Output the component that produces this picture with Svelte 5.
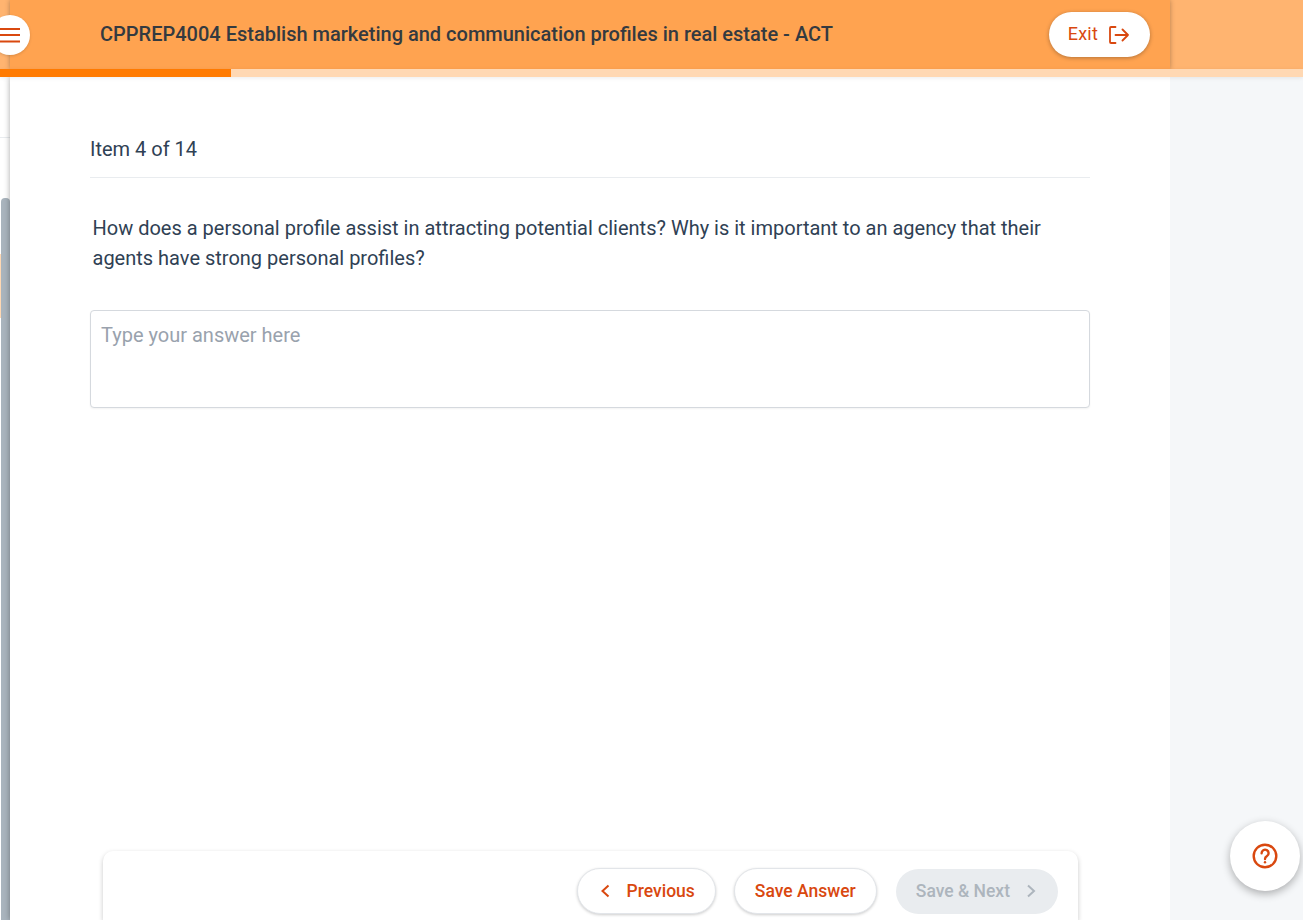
<script lang="ts">
	let answer = $state('');
</script>

<div class="page">
	<div class="top">
		<div class="top-left"></div>
		<header class="header">
			<button class="menu-btn" aria-label="Menu">
				<svg width="21" height="16" viewBox="0 0 21 16" fill="none" stroke="#d9480f" stroke-width="2">
					<path d="M0 2h20M0 8h20M0 14.4h20" />
				</svg>
			</button>
			<h1>CPPREP4004 Establish marketing and communication profiles in real estate - ACT</h1>
			<button class="exit-btn">
				<span class="exit-label">Exit</span>
				<svg width="20" height="18" viewBox="0 0 20 18" fill="none" stroke="#d9480f" stroke-width="1.8" stroke-linecap="round" stroke-linejoin="round">
					<path d="M6.5 1H2a1 1 0 0 0-1 1v14a1 1 0 0 0 1 1h4.5" />
					<path d="M6.5 9h12.5M13.5 3.5 19 9l-5.5 5.5" />
				</svg>
			</button>
		</header>
		<div class="top-right"></div>
	</div>
	<div class="progress"><div class="progress-fill" style="width: 231px"></div></div>

	<div class="body">
		<div class="strip">
			<div class="strip-line"></div>
			<div class="thumb"></div>
		</div>
		<main class="main">
			<div class="item-count">Item 4 of 14</div>
			<p class="question">
				How does a personal profile assist in attracting potential clients? Why is it important to an agency that their agents have strong personal profiles?
			</p>
			<textarea class="answer" placeholder="Type your answer here" bind:value={answer}></textarea>
			<div class="spacer"></div>
			<div class="actions">
				<button class="pill prev">
					<svg width="10" height="14" viewBox="0 0 10 14" fill="none" stroke="#d9480f" stroke-width="2"><path d="M8.5 1.5 2.5 7l6 5.5" /></svg>
					<span class="prev-label">Previous</span>
				</button>
				<button class="pill save">Save Answer</button>
				<button class="pill disabled" disabled>
					Save &amp; Next
					<svg width="10" height="14" viewBox="0 0 10 14" fill="none" stroke="#adb5bd" stroke-width="2"><path d="M2 1.5 8 7l-6 5.5" /></svg>
				</button>
			</div>
		</main>
		<aside class="side">
			<button class="help" aria-label="Help">
				<svg width="26" height="26" viewBox="0 0 26 26" fill="none" stroke="#d9480f" stroke-width="2.4" stroke-linecap="round">
					<circle cx="13" cy="13" r="11.3" />
					<path d="M9.6 10.2a3.5 3.5 0 1 1 5.4 2.9c-1.2.8-2 1.4-2 2.9" />
					<path d="M13 19.2v.1" />
				</svg>
			</button>
		</aside>
	</div>
</div>

<style>
	:global(body) {
		margin: 0;
		font-family: Roboto, 'Liberation Sans', sans-serif;
		overflow: hidden;
	}

	button {
		font-family: inherit;
		cursor: pointer;
	}

	.page {
		height: 920px;
		display: flex;
		flex-direction: column;
		background: #fff;
		overflow: hidden;
	}

	.top {
		display: flex;
		height: 69px;
		flex-shrink: 0;
	}

	.top-left {
		width: 10px;
		background: #ffb470;
	}

	.top-right {
		flex: 1;
		background: #ffb470;
	}

	.header {
		width: 1160px;
		background: #ffa350;
		display: flex;
		align-items: center;
		box-shadow: 0 0 5px rgba(0, 0, 0, 0.3);
		position: relative;
		padding-right: 20px;
		box-sizing: border-box;
	}

	.menu-btn {
		width: 40px;
		height: 40px;
		margin-left: -20px;
		border: none;
		border-radius: 50%;
		background: #fff;
		padding: 0 0 0 10px;
		display: flex;
		align-items: center;
		justify-content: flex-start;
		box-shadow: 0 1px 3px rgba(0, 0, 0, 0.15);
		flex-shrink: 0;
	}

	h1 {
		flex: 1;
		margin: 0 0 1px 70px;
		font-size: 20px;
		line-height: 23px;
		font-weight: 500;
		color: #343a40;
		white-space: nowrap;
	}

	.exit-btn {
		display: flex;
		align-items: center;
		gap: 11px;
		height: 45px;
		padding: 0 21px 0 19px;
		border: none;
		border-radius: 23px;
		background: #fff;
		color: #d9480f;
		font-size: 18px;
		box-shadow: 0 1px 4px rgba(0, 0, 0, 0.3);
	}

	.exit-label {
		margin-bottom: 2px;
		letter-spacing: 0.2px;
	}

	.progress {
		height: 8px;
		background: #ffd8b3;
		flex-shrink: 0;
		position: relative;
		z-index: 2;
		box-shadow: 0 1px 4px rgba(0, 0, 0, 0.08);
	}

	.progress-fill {
		height: 100%;
		background: #ff7a00;
	}

	.body {
		flex: 1;
		display: flex;
		min-height: 0;
	}

	.strip {
		width: 10px;
		background: #fff;
		display: flex;
		flex-direction: column;
		box-sizing: border-box;
		padding-top: 60px;
		position: relative;
	}

	.strip-line {
		height: 1px;
		background: #e9ecef;
	}

	.strip::after {
		content: '';
		position: absolute;
		left: 0;
		top: 177px;
		width: 1px;
		height: 64px;
		background: #ffd8b3;
	}

	.thumb {
		flex: 1;
		margin: 60px 0 0 1px;
		background: #a9b4bd;
		border-radius: 4px 4px 0 0;
	}

	.main {
		width: 1160px;
		box-sizing: border-box;
		padding: 59px 80px 0;
		display: flex;
		flex-direction: column;
		background: #fff;
		box-shadow: 0 0 6px rgba(0, 0, 0, 0.35);
		position: relative;
	}

	.item-count {
		font-size: 20px;
		line-height: 27px;
		color: #2f4154;
		padding-bottom: 14px;
		border-bottom: 1px solid #e9ecef;
	}

	.question {
		margin: 35px 0 0 2.5px;
		font-size: 20px;
		line-height: 30px;
		color: #2f4154;
	}

	.answer {
		margin-top: 37px;
		height: 98px;
		box-sizing: border-box;
		width: 100%;
		padding: 12px 10px;
		border: 1px solid #d5d9de;
		border-radius: 4px;
		font-family: inherit;
		font-size: 20px;
		resize: none;
		outline: none;
		box-shadow: 0 1px 2px rgba(0, 0, 0, 0.05);
	}

	.answer::placeholder {
		color: #99a2ad;
	}

	.spacer {
		flex: 1;
	}

	.actions {
		margin: 0 12px 0 13px;
		height: 69px;
		box-sizing: border-box;
		padding: 17px 20px 0;
		display: flex;
		justify-content: flex-end;
		align-items: flex-start;
		gap: 18px;
		border-radius: 10px 10px 0 0;
		background: #fff;
		box-shadow: 0 2px 5px rgba(0, 0, 0, 0.22);
	}

	.pill {
		height: 46px;
		display: flex;
		align-items: center;
		padding: 0 20px;
		border: 1px solid #e2e5e9;
		border-radius: 23px;
		background: #fff;
		color: #d9480f;
		font-size: 17.5px;
		font-weight: 500;
		box-shadow: 0 1px 3px rgba(0, 0, 0, 0.2);
	}

	.pill.prev {
		padding-left: 22px;
	}

	.prev-label {
		margin-left: 17px;
	}

	.pill.disabled {
		height: 45px;
		margin: 1px 0 0 1px;
		padding: 0 22px 1px 20px;
		border: none;
		background: #e9ecef;
		color: #adb5bd;
		box-shadow: none;
		gap: 16px;
		cursor: default;
	}

	.side {
		flex: 1;
		background: #f5f7f9;
		position: relative;
	}

	.help {
		position: absolute;
		right: 3px;
		bottom: 29px;
		width: 70px;
		height: 70px;
		border: none;
		border-radius: 50%;
		background: #fff;
		display: flex;
		align-items: center;
		justify-content: center;
		padding: 0;
		box-shadow: 0 3px 8px rgba(0, 0, 0, 0.3);
	}
</style>
